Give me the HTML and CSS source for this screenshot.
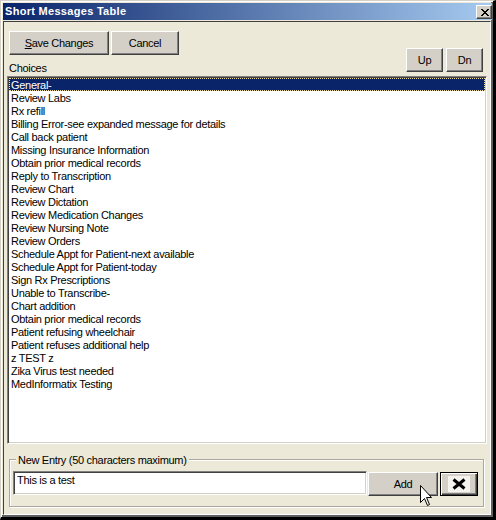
FILE: index.html
```html
<!DOCTYPE html>
<html>
<head>
<meta charset="utf-8">
<title>Short Messages Table</title>
<link rel="stylesheet" href="styles.css">
</head>
<body>
<div class="window">
  <div class="titlebar">
    <span class="title">Short Messages Table</span>
    <button class="tb-close" aria-label="Close">
      <svg width="8" height="7" viewBox="0 0 8 7" shape-rendering="crispEdges">
        <rect x="0" y="0" width="2" height="1"/><rect x="6" y="0" width="2" height="1"/>
        <rect x="1" y="1" width="2" height="1"/><rect x="5" y="1" width="2" height="1"/>
        <rect x="2" y="2" width="4" height="1"/>
        <rect x="3" y="3" width="2" height="1"/>
        <rect x="2" y="4" width="4" height="1"/>
        <rect x="1" y="5" width="2" height="1"/><rect x="5" y="5" width="2" height="1"/>
        <rect x="0" y="6" width="2" height="1"/><rect x="6" y="6" width="2" height="1"/>
      </svg>
    </button>
  </div>
  <div class="client">
    <div class="top">
      <div class="top-left">
        <div class="btn-row">
          <button class="btn btn-save"><u>S</u>ave Changes</button>
          <button class="btn btn-cancel">Cancel</button>
        </div>
        <div class="label">Choices</div>
      </div>
      <div class="top-right">
        <button class="btn btn-small">Up</button>
        <button class="btn btn-small">Dn</button>
      </div>
    </div>
    <div class="list">
      <div class="item selected">General-</div>
      <div class="item">Review Labs</div>
      <div class="item">Rx refill</div>
      <div class="item">Billing Error-see expanded message for details</div>
      <div class="item">Call back patient</div>
      <div class="item">Missing Insurance Information</div>
      <div class="item">Obtain prior medical records</div>
      <div class="item">Reply to Transcription</div>
      <div class="item">Review Chart</div>
      <div class="item">Review Dictation</div>
      <div class="item">Review Medication Changes</div>
      <div class="item">Review Nursing Note</div>
      <div class="item">Review Orders</div>
      <div class="item">Schedule Appt for Patient-next available</div>
      <div class="item">Schedule Appt for Patient-today</div>
      <div class="item">Sign Rx Prescriptions</div>
      <div class="item">Unable to Transcribe-</div>
      <div class="item">Chart addition</div>
      <div class="item">Obtain prior medical records</div>
      <div class="item">Patient refusing wheelchair</div>
      <div class="item">Patient refuses additional help</div>
      <div class="item">z TEST z</div>
      <div class="item">Zika Virus test needed</div>
      <div class="item">MedInformatix Testing</div>
    </div>
    <div class="group">
      <div class="legend">New Entry (50 characters maximum)</div>
      <div class="entry-row">
        <input class="textbox" type="text" value="This is a test">
        <button class="btn btn-add">Add</button>
        <button class="btn btn-x" aria-label="Delete">
          <svg width="22" height="16" viewBox="0 0 22 16">
            <rect x="0" y="0" width="22" height="16" fill="#f4f3ee"/>
            <path d="M5.5 3.5 L16.5 12.5 M16.5 3.5 L5.5 12.5" stroke="#000" stroke-width="3" fill="none"/>
          </svg>
        </button>
      </div>
    </div>
  </div>
  <svg class="cursor" width="13" height="22" viewBox="0 0 13 22">
    <path d="M0.5 0.5 L0.5 17.5 L4.5 13.5 L7.5 20.5 L9.5 19.5 L6.5 12.5 L11.5 12.5 Z" fill="#fff" stroke="#000" stroke-width="1" stroke-linejoin="miter"/>
  </svg>
</div>
</body>
</html>
```
FILE: styles.css
```css
html, body {
  margin: 0;
  padding: 0;
  background: #ece9d8;
}

.window {
  position: relative;
  box-sizing: border-box;
  width: 496px;
  height: 520px;
  background: #ece9d8;
  border-style: solid;
  border-width: 1px 3px 3px 1px;
  border-color: #d4d0c8 #000 #000 #d4d0c8;
  box-shadow: inset 1px 1px #fff, inset -2px -2px #606060;
  padding: 2px 1px 2px 2px;
  display: flex;
  flex-direction: column;
  font-family: "Liberation Sans", Arial, sans-serif;
  font-size: 11px;
  letter-spacing: -0.3px;
  font-variant-ligatures: none;
  font-feature-settings: "liga" 0, "clig" 0;
  color: #000;
}

.titlebar {
  height: 17px;
  margin-bottom: 1px;
  background: linear-gradient(to right, #0a246a, #a6caf0);
  display: flex;
  align-items: flex-start;
  justify-content: space-between;
}

.title {
  color: #fff;
  font-weight: bold;
  font-size: 11px;
  letter-spacing: 0.3px;
  line-height: 17px;
  padding-left: 2px;
}

.tb-close {
  box-sizing: border-box;
  width: 16px;
  height: 14px;
  margin-top: 2px;
  padding: 0 0 0 1px;
  background: #d4d0c8;
  border: 1px solid;
  border-color: #fff #404040 #404040 #fff;
  box-shadow: inset -1px -1px #808080;
  display: flex;
  align-items: center;
  justify-content: center;
}

.tb-close svg {
  fill: #000;
  display: block;
}

.client {
  flex: 1;
  margin-right: 1px;
  border: 1px solid;
  border-color: #404040 #fff #fff #404040;
  display: flex;
  flex-direction: column;
}

.top {
  height: 54px;
  display: flex;
  justify-content: space-between;
  flex-shrink: 0;
}

.top-left {
  padding-left: 5px;
  padding-top: 9px;
}

.btn-row {
  display: flex;
  gap: 2px;
}

.btn {
  box-sizing: border-box;
  height: 24px;
  padding: 0;
  margin: 0;
  background: #d4d0c8;
  border: 1px solid;
  border-color: #fff #404040 #404040 #fff;
  box-shadow: inset -1px -1px #808080;
  font-family: inherit;
  font-size: 11px;
  letter-spacing: -0.3px;
  font-variant-ligatures: none;
  line-height: 13px;
  color: #000;
  display: flex;
  align-items: center;
  justify-content: center;
}

.btn-save { width: 100px; }
.btn-cancel { width: 68px; }

.label {
  margin-top: 7px;
  line-height: 13px;
}

.top-right {
  padding-top: 26px;
  padding-right: 7px;
  display: flex;
  align-items: flex-start;
  gap: 3px;
}

.btn-small { width: 37px; }

.list {
  box-sizing: border-box;
  width: 480px;
  height: 368px;
  margin-left: 3px;
  flex-shrink: 0;
  padding: 1px;
  background: #fff;
  border: 1px solid;
  border-color: #808080 #fff #fff #808080;
  box-shadow: inset 1px 1px #404040, inset -1px -1px #d4d0c8;
}

.item {
  height: 13px;
  line-height: 14px;
  padding-left: 2px;
  white-space: nowrap;
}

.item.selected {
  background: #0a246a;
  color: #fff;
  outline: 1px dotted #f1df9a;
  outline-offset: -1px;
}

.group {
  box-sizing: border-box;
  width: 475px;
  height: 48px;
  margin-top: 15px;
  margin-left: 5px;
  border: 1px solid #aca899;
  box-shadow: inset 1px 1px #fff, 1px 1px #fff;
  display: flex;
  flex-direction: column;
  align-items: flex-start;
  flex-shrink: 0;
}

.legend {
  margin-top: -6px;
  margin-left: 6px;
  padding: 0 2px;
  line-height: 13px;
  background: #ece9d8;
}

.entry-row {
  margin-top: 4px;
  padding-left: 3px;
  display: flex;
  align-items: flex-start;
}

.textbox {
  box-sizing: border-box;
  width: 354px;
  height: 24px;
  margin: 0;
  padding: 0 3px 6px 3px;
  background: #fff;
  border: 1px solid;
  border-color: #808080 #fff #fff #808080;
  box-shadow: inset 1px 1px #404040, inset -1px -1px #d4d0c8;
  font-family: inherit;
  font-size: 11px;
  letter-spacing: -0.3px;
  line-height: 13px;
  color: #000;
  outline: none;
}

.btn-add {
  width: 70px;
  margin-left: 1px;
  margin-top: 1px;
}

.btn-x {
  width: 38px;
  margin-left: 2px;
  margin-top: 1px;
  border: 1px solid #000;
  box-shadow: inset 1px 1px #fff, inset -1px -1px #404040, inset -2px -2px #808080;
}

.btn-x svg { display: block; }

.cursor {
  position: absolute;
  left: 419px;
  top: 484px;
}
```
